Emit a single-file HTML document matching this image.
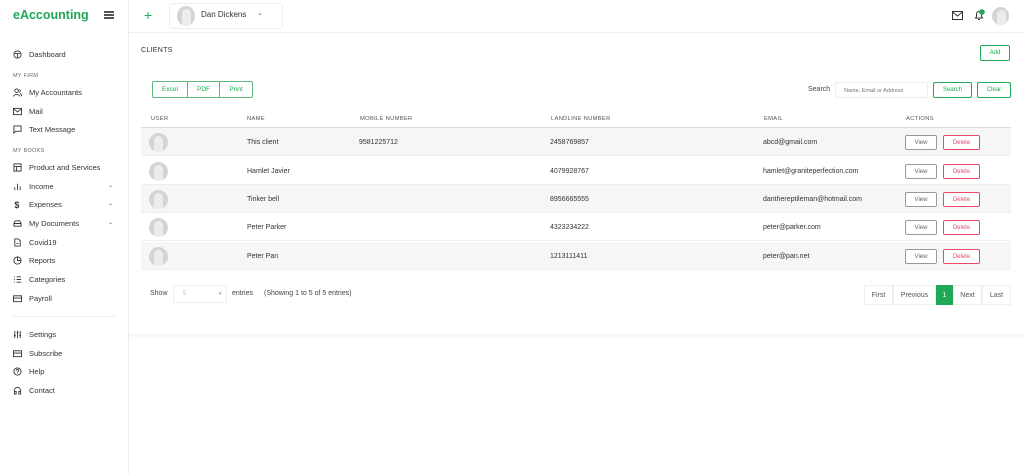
<!DOCTYPE html>
<html><head><style>
*{box-sizing:border-box;margin:0;padding:0}
body{width:1024px;height:474px;background:#fff;font-family:"Liberation Sans",sans-serif;color:#333;position:relative;overflow:hidden;font-size:7px}
.a{position:absolute;white-space:nowrap}
.side{position:absolute;left:0;top:0;width:129px;height:474px;border-right:1px solid #eee;background:#fff}
.hdr{position:absolute;left:129px;top:0;right:0;height:33px;border-bottom:1px solid #eee;background:#fff}
.ni{position:absolute;left:13px;font-size:7.5px;color:#333}
.ni svg{position:absolute;left:0;top:0;width:9px;height:9px}
.ni span{position:absolute;left:16px;top:0;white-space:nowrap}
.sec{position:absolute;left:13px;font-size:5.5px;color:#666;letter-spacing:.3px}
.chev{position:absolute;left:108px;font-size:6px;color:#555}
.btn,.v,.d,.pg{display:flex;align-items:center;justify-content:center}
.btn{position:absolute;border:1px solid #1fa855;color:#1fa855;border-radius:2px;font-size:6.5px;background:#fff}
.th{position:absolute;top:116px;font-size:5.8px;color:#555;letter-spacing:.3px}
.row{position:absolute;left:141px;width:870px;height:28px;border-bottom:1px solid #eee}
.row.s{background:#f6f6f6}
.av{position:absolute;left:8px;top:5px;width:19px;height:19px;border-radius:50%;background:#d4d4d4;overflow:hidden}
.av:after{content:"";position:absolute;left:5px;top:3px;width:9px;height:17px;border-radius:5px 5px 0 0;background:#ececec}
.c{position:absolute;top:11px;font-size:7px;color:#333}
.v{position:absolute;left:764px;top:7px;width:32px;height:15px;border:1px solid #999;border-radius:2px;font-size:6px;color:#666;background:#fff}
.d{position:absolute;left:802px;top:7px;width:37px;height:15px;border:1px solid #e8496b;border-radius:2px;font-size:6px;color:#e8496b;background:#fff}
.pg{position:absolute;top:285px;height:20px;border:1px solid #eee;font-size:7px;color:#555;background:#fff}
</style></head><body>
<div class="side">
<div class="a" style="left:13px;top:8px;font-size:12.5px;font-weight:bold;color:#1fa855">eAccounting</div>
<div class="a" style="left:104px;top:11px;width:10px;height:1.5px;background:#555;box-shadow:0 3px 0 #555,0 6px 0 #555"></div>
<div class="ni" style="top:50px"><svg viewBox="0 0 10 10"><circle cx="5" cy="5" r="4" fill="none" stroke="#333" stroke-width="1"/><path d="M2 4h6M5 4v5" stroke="#333" stroke-width="1"/></svg><span>Dashboard</span></div>
<div class="sec" style="top:73px">MY FIRM</div>
<div class="ni" style="top:88px"><svg viewBox="0 0 10 10"><circle cx="4" cy="3" r="2" fill="none" stroke="#333"/><path d="M0.5 9.5c0-3 7-3 7 0M7 1.5a2 2 0 010 3.5M8 6c1 .5 1.5 1.5 1.5 3" fill="none" stroke="#333"/></svg><span>My Accountants</span></div>
<div class="ni" style="top:107px"><svg viewBox="0 0 10 10"><rect x="0.5" y="1.5" width="9" height="7" fill="none" stroke="#333"/><path d="M0.5 2l4.5 3.5 4.5-3.5" fill="none" stroke="#333"/></svg><span>Mail</span></div>
<div class="ni" style="top:125px"><svg viewBox="0 0 10 10"><path d="M1 1h8v6H3L1 9z" fill="none" stroke="#333"/></svg><span>Text Message</span></div>
<div class="sec" style="top:148px">MY BOOKS</div>
<div class="ni" style="top:163px"><svg viewBox="0 0 10 10"><rect x="1" y="1" width="8" height="8" fill="none" stroke="#333"/><path d="M1 4h8M4 4v5" stroke="#333"/></svg><span>Product and Services</span></div>
<div class="ni" style="top:182px"><svg viewBox="0 0 10 10"><path d="M2 9V6M5 9V2M8 9V5" stroke="#333"/></svg><span>Income</span></div><div class="chev" style="top:182px">⌄</div>
<div class="ni" style="top:200px"><svg viewBox="0 0 10 10"><text x="1.5" y="9" font-size="10" font-weight="bold" fill="#333">$</text></svg><span>Expenses</span></div><div class="chev" style="top:200px">⌄</div>
<div class="ni" style="top:219px"><svg viewBox="0 0 10 10"><path d="M1 5l1.5-3h5L9 5v3H1z M1 5h8" fill="none" stroke="#333"/></svg><span>My Documents</span></div><div class="chev" style="top:219px">⌄</div>
<div class="ni" style="top:238px"><svg viewBox="0 0 10 10"><path d="M2 1h4l2 2v6H2z M4 6h2" fill="none" stroke="#333"/></svg><span>Covid19</span></div>
<div class="ni" style="top:256px"><svg viewBox="0 0 10 10"><circle cx="5" cy="5" r="4" fill="none" stroke="#333"/><path d="M5 1v4h4" fill="none" stroke="#333"/></svg><span>Reports</span></div>
<div class="ni" style="top:275px"><svg viewBox="0 0 10 10"><path d="M1 2h1M1 5h1M1 8h1M4 2h5M4 5h5M4 8h5" stroke="#333"/></svg><span>Categories</span></div>
<div class="ni" style="top:294px"><svg viewBox="0 0 10 10"><rect x="0.5" y="2" width="9" height="6.5" fill="none" stroke="#333"/><path d="M0.5 4.5h9" stroke="#333"/></svg><span>Payroll</span></div>
<div class="a" style="left:13px;top:316px;width:103px;height:1px;background:#eee"></div>
<div class="ni" style="top:330px"><svg viewBox="0 0 10 10"><path d="M2 1v8M5 1v8M8 1v8M1 6h2M4 3h2M7 6h2" stroke="#333"/></svg><span>Settings</span></div>
<div class="ni" style="top:349px"><svg viewBox="0 0 10 10"><rect x="0.5" y="2" width="9" height="6.5" fill="none" stroke="#333"/><path d="M0.5 4.5h9" stroke="#333"/></svg><span>Subscribe</span></div>
<div class="ni" style="top:367px"><svg viewBox="0 0 10 10"><circle cx="5" cy="5" r="4" fill="none" stroke="#333"/><path d="M3.7 4a1.3 1.3 0 112 1c-.6.3-.7.6-.7 1.2M5 7.3v.4" fill="none" stroke="#333"/></svg><span>Help</span></div>
<div class="ni" style="top:386px"><svg viewBox="0 0 10 10"><path d="M1.5 8V5a3.5 3.5 0 017 0v3M1.5 6h2v3h-2zM6.5 6h2v3h-2z" fill="none" stroke="#333"/></svg><span>Contact</span></div>
</div>
<div class="hdr">
<div class="a" style="left:15px;top:7px;font-size:14px;color:#1fa855">+</div>
<div class="a" style="left:40px;top:3px;width:114px;height:26px;border:1px solid #eee;border-radius:3px"></div>
<div class="av" style="left:48px;top:6px;width:18px;height:20px"></div>
<div class="a" style="left:72px;top:10px;font-size:8px;color:#333">Dan Dickens</div>
<div class="a" style="left:128px;top:9px;font-size:7px;color:#555">⌄</div>
<svg class="a" style="left:823px;top:11px" width="11" height="9" viewBox="0 0 11 9"><rect x="0.5" y="0.5" width="10" height="8" fill="none" stroke="#333"/><path d="M0.5 1l5 4 5-4" fill="none" stroke="#333"/></svg>
<svg class="a" style="left:844px;top:9px" width="12" height="12" viewBox="0 0 12 12"><path d="M2.5 9h7l-1-1.5V5a2.5 2.5 0 00-5 0v2.5z M5 10.5h2" fill="none" stroke="#333"/><circle cx="9" cy="3" r="2.8" fill="#1fa855"/></svg>
<div class="av" style="left:863px;top:7px;width:17px;height:18px"></div>
</div>
<div class="a" style="left:129px;top:334px;right:0;height:5px;background:linear-gradient(#f4f4f4,#fff)"></div>
<div class="a" style="left:141px;top:47px;font-size:7px;color:#333;letter-spacing:.3px">CLIENTS</div>
<div class="btn" style="left:980px;top:45px;width:30px;height:16px;font-size:6px">Add</div>
<div class="btn" style="left:152px;top:81px;width:36px;height:17px;border-color:#5cb87e;border-radius:2px 0 0 2px">Excel</div>
<div class="btn" style="left:187px;top:81px;width:33px;height:17px;border-color:#5cb87e;border-radius:0">PDF</div>
<div class="btn" style="left:219px;top:81px;width:34px;height:17px;border-color:#5cb87e;border-radius:0 2px 2px 0">Print</div>
<div class="a" style="left:808px;top:86px;font-size:7px;color:#444">Search</div>
<div class="a" style="left:835px;top:82px;width:93px;height:16px;border:1px solid #eee;font-size:5.5px;color:#777;padding:5px 0 0 8px">Name, Email or Address</div>
<div class="btn" style="left:933px;top:82px;width:39px;height:16px;font-size:6px">Search</div>
<div class="btn" style="left:977px;top:82px;width:34px;height:16px;font-size:6px">Clear</div>
<div class="th" style="left:151px">USER</div><div class="th" style="left:247px">NAME</div><div class="th" style="left:360px">MOBILE NUMBER</div><div class="th" style="left:551px">LANDLINE NUMBER</div><div class="th" style="left:764px">EMAIL</div><div class="th" style="left:906px">ACTIONS</div>
<div class="a" style="left:141px;top:127px;width:870px;height:1px;background:#ddd"></div>
<div class="row s" style="top:128px"><div class="av"></div><div class="c" style="left:106px">This client</div><div class="c" style="left:218px">9581225712</div><div class="c" style="left:409px">2458769857</div><div class="c" style="left:622px">abcd@gmail.com</div><div class="v">View</div><div class="d">Delete</div></div>
<div class="row" style="top:157px"><div class="av"></div><div class="c" style="left:106px">Hamlet Javier</div><div class="c" style="left:409px">4079928767</div><div class="c" style="left:622px">hamlet@graniteperfection.com</div><div class="v">View</div><div class="d">Delete</div></div>
<div class="row s" style="top:185px"><div class="av"></div><div class="c" style="left:106px">Tinker bell</div><div class="c" style="left:409px">8956665555</div><div class="c" style="left:622px">danthereptileman@hotmail.com</div><div class="v">View</div><div class="d">Delete</div></div>
<div class="row" style="top:213px"><div class="av"></div><div class="c" style="left:106px">Peter Parker</div><div class="c" style="left:409px">4323234222</div><div class="c" style="left:622px">peter@parker.com</div><div class="v">View</div><div class="d">Delete</div></div>
<div class="row s" style="top:242px"><div class="av"></div><div class="c" style="left:106px">Peter Pan</div><div class="c" style="left:409px">1213111411</div><div class="c" style="left:622px">peter@pan.net</div><div class="v">View</div><div class="d">Delete</div></div>
<div class="a" style="left:150px;top:290px;font-size:7px;color:#444">Show</div>
<div class="a" style="left:173px;top:285px;width:54px;height:18px;border:1px solid #eee;font-size:6px;color:#bbb;padding:5px 0 0 9px">5<span style="position:absolute;left:45px;top:5px;font-size:5px;color:#999">▾</span></div>
<div class="a" style="left:232px;top:290px;font-size:7px;color:#444">entries</div>
<div class="a" style="left:264px;top:290px;font-size:7px;color:#444">(Showing 1 to 5 of 5 entries)</div>
<div class="pg" style="left:864px;width:29px">First</div>
<div class="pg" style="left:893px;width:43px">Previous</div>
<div class="pg" style="left:936px;width:17px;background:#1fa855;color:#fff;border-color:#1fa855">1</div>
<div class="pg" style="left:953px;width:29px">Next</div>
<div class="pg" style="left:982px;width:29px">Last</div>
</body></html>
